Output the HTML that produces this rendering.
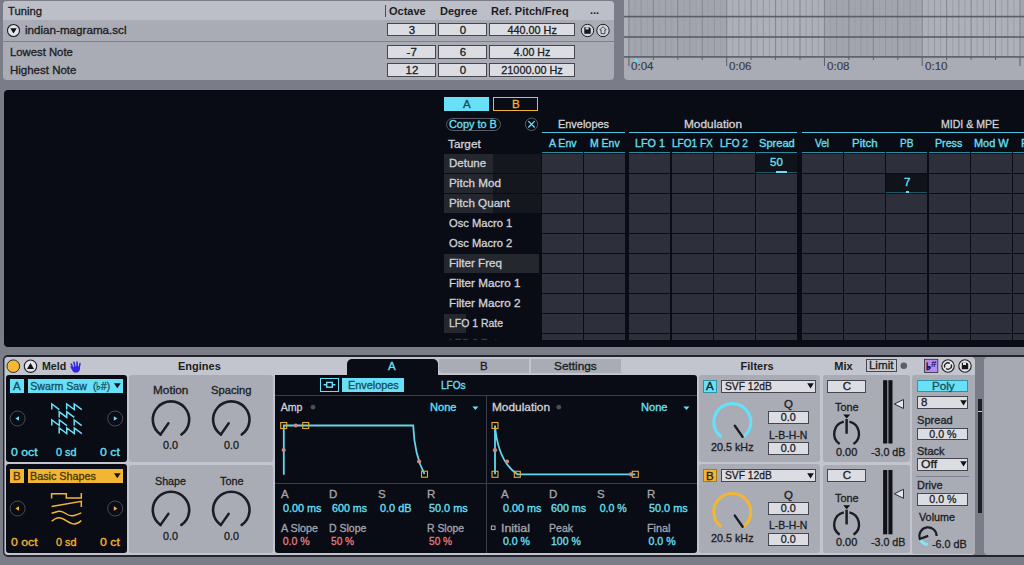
<!DOCTYPE html>
<html><head><meta charset="utf-8"><title>Meld</title>
<style>
html,body{margin:0;padding:0;}
body{width:1024px;height:565px;overflow:hidden;background:#7a7c88;position:relative;font-family:"Liberation Sans",sans-serif;font-size:10.6px;color:#1c1d22;-webkit-text-stroke:0.3px;}
.a{position:absolute;}
.t{position:absolute;white-space:nowrap;line-height:14px;height:14px;}
.c{text-align:center;}
.b{font-weight:bold;font-size:11px;-webkit-text-stroke:0;}
.vb{position:absolute;box-sizing:border-box;border:1px solid #45464e;background:#dcdde3;text-align:center;line-height:11px;height:13px;white-space:nowrap;}
.cy{color:#68e0f7;}
.go{color:#f3b632;}
.gr{color:#a4a5ad;}
.pk{color:#e27c7c;}
.wh{color:#d0d1d7;}
.sp{position:absolute;background:#a9abb5;border-radius:3px;}
.dk{position:absolute;background:#0a0c15;}
</style></head><body>
<!-- TUNING PANEL -->
<div class="a" style="left:3px;top:1px;width:611px;height:78.5px;background:#a9abb5;border-radius:4px;overflow:hidden;">
  <div class="a" style="left:0;top:0;width:611px;height:19.4px;background:#bcbec8;"></div>
  <div class="a" style="left:0;top:40px;width:611px;height:1px;background:#7d7f89;"></div>
</div>
<div class="t " style="left:7.5px;top:3.5px;transform:scaleX(1.059);transform-origin:0 50%;">Tuning</div>
<div class="t " style="left:25.0px;top:22.5px;transform:scaleX(1.098);transform-origin:0 50%;">indian-magrama.scl</div>
<div class="t " style="left:10.2px;top:44.5px;transform:scaleX(1.067);transform-origin:0 50%;">Lowest Note</div>
<div class="t " style="left:10.2px;top:62.5px;transform:scaleX(1.084);transform-origin:0 50%;">Highest Note</div>

<svg class="a" style="left:6px;top:23px;" width="15" height="15" viewBox="0 0 15 15"><circle cx="7.5" cy="7.5" r="6" fill="#e4e5ea" stroke="#1c1d22" stroke-width="1.1"/><path d="M4.2 5.2h6.6L7.5 10.6z" fill="#111"/></svg>
<div class="a" style="left:385px;top:5px;width:1px;height:12px;background:#4a4b53;"></div>
<div class="t b" style="left:389px;top:4px;">Octave</div>
<div class="t b" style="left:440px;top:4px;">Degree</div>
<div class="t b" style="left:491px;top:4px;">Ref. Pitch/Freq</div>
<div class="t b" style="left:590px;top:3px;">...</div>
<div class="vb" style="left:387.0px;top:23.0px;width:49.0px;height:13.0px;line-height:11.0px;line-height:12px;"><span style="display:inline-block;transform:scaleX(1.085);transform-origin:50% 50%;">3</span></div>
<div class="vb" style="left:438.0px;top:23.0px;width:49.0px;height:13.0px;line-height:11.0px;line-height:12px;"><span style="display:inline-block;transform:scaleX(1.085);transform-origin:50% 50%;">0</span></div>
<div class="vb" style="left:489.0px;top:23.0px;width:86.0px;height:13.0px;line-height:11.0px;line-height:12px;"><span style="display:inline-block;transform:scaleX(1.021);transform-origin:50% 50%;">440.00 Hz</span></div>
<div class="vb" style="left:387.0px;top:45.0px;width:49.0px;height:14.0px;line-height:12.0px;line-height:13px;"><span style="display:inline-block;transform:scaleX(1.085);transform-origin:50% 50%;">-7</span></div>
<div class="vb" style="left:438.0px;top:45.0px;width:49.0px;height:14.0px;line-height:12.0px;line-height:13px;"><span style="display:inline-block;transform:scaleX(1.085);transform-origin:50% 50%;">6</span></div>
<div class="vb" style="left:489.0px;top:45.0px;width:86.0px;height:14.0px;line-height:12.0px;line-height:13px;"><span style="display:inline-block;">4.00 Hz</span></div>
<div class="vb" style="left:387.0px;top:63.0px;width:49.0px;height:14.0px;line-height:12.0px;line-height:13px;"><span style="display:inline-block;transform:scaleX(1.085);transform-origin:50% 50%;">12</span></div>
<div class="vb" style="left:438.0px;top:63.0px;width:49.0px;height:14.0px;line-height:12.0px;line-height:13px;"><span style="display:inline-block;transform:scaleX(1.085);transform-origin:50% 50%;">0</span></div>
<div class="vb" style="left:489.0px;top:63.0px;width:86.0px;height:14.0px;line-height:12.0px;line-height:13px;"><span style="display:inline-block;transform:scaleX(1.024);transform-origin:50% 50%;">21000.00 Hz</span></div>
<svg class="a" style="left:580px;top:23px;" width="32" height="15" viewBox="0 0 32 15">
<circle cx="7.5" cy="7.5" r="6.2" fill="#d4d5db" stroke="#1c1d22" stroke-width="1"/>
<path d="M4.3 4.3h5.2l1.2 1.2v5.2H4.3z" fill="#16171c"/><rect x="5.6" y="4.3" width="3" height="2.2" fill="#d4d5db"/>
<circle cx="23" cy="7.5" r="6.2" fill="#d4d5db" stroke="#1c1d22" stroke-width="1"/>
<path d="M23 3.6l3.2 3.2h-1.3v3.9h-3.8V6.8h-1.3z" fill="none" stroke="#33343b" stroke-width="0.9"/>
</svg>
<!-- TIMELINE -->
<div class="a" style="left:624px;top:0;width:400px;height:79.5px;background:#a9abb5;border-radius:0 0 0 4px;overflow:hidden;">
<svg class="a" style="left:0;top:0" width="400" height="80" viewBox="0 0 400 80"><rect x="-92.9" y="0" width="97.8" height="57" fill="#adafb9"/><rect x="4.9" y="0" width="97.8" height="57" fill="#a2a4ae"/><rect x="102.7" y="0" width="97.8" height="57" fill="#adafb9"/><rect x="200.4" y="0" width="97.8" height="57" fill="#a2a4ae"/><rect x="298.2" y="0" width="97.8" height="57" fill="#adafb9"/><rect x="396.0" y="0" width="97.8" height="57" fill="#a2a4ae"/><rect x="4.40" y="0" width="1" height="57" fill="#83858f"/><rect x="10.51" y="0" width="1" height="57" fill="#9c9ea8"/><rect x="16.62" y="0" width="1" height="57" fill="#92949e"/><rect x="22.73" y="0" width="1" height="57" fill="#9c9ea8"/><rect x="28.84" y="0" width="1" height="57" fill="#83858f"/><rect x="34.95" y="0" width="1" height="57" fill="#9c9ea8"/><rect x="41.06" y="0" width="1" height="57" fill="#92949e"/><rect x="47.17" y="0" width="1" height="57" fill="#9c9ea8"/><rect x="53.28" y="0" width="1" height="57" fill="#83858f"/><rect x="59.40" y="0" width="1" height="57" fill="#9c9ea8"/><rect x="65.51" y="0" width="1" height="57" fill="#92949e"/><rect x="71.62" y="0" width="1" height="57" fill="#9c9ea8"/><rect x="77.73" y="0" width="1" height="57" fill="#83858f"/><rect x="83.84" y="0" width="1" height="57" fill="#9c9ea8"/><rect x="89.95" y="0" width="1" height="57" fill="#92949e"/><rect x="96.06" y="0" width="1" height="57" fill="#9c9ea8"/><rect x="102.17" y="0" width="1" height="57" fill="#83858f"/><rect x="108.28" y="0" width="1" height="57" fill="#9c9ea8"/><rect x="114.39" y="0" width="1" height="57" fill="#92949e"/><rect x="120.50" y="0" width="1" height="57" fill="#9c9ea8"/><rect x="126.61" y="0" width="1" height="57" fill="#83858f"/><rect x="132.72" y="0" width="1" height="57" fill="#9c9ea8"/><rect x="138.83" y="0" width="1" height="57" fill="#92949e"/><rect x="144.94" y="0" width="1" height="57" fill="#9c9ea8"/><rect x="151.05" y="0" width="1" height="57" fill="#83858f"/><rect x="157.17" y="0" width="1" height="57" fill="#9c9ea8"/><rect x="163.28" y="0" width="1" height="57" fill="#92949e"/><rect x="169.39" y="0" width="1" height="57" fill="#9c9ea8"/><rect x="175.50" y="0" width="1" height="57" fill="#83858f"/><rect x="181.61" y="0" width="1" height="57" fill="#9c9ea8"/><rect x="187.72" y="0" width="1" height="57" fill="#92949e"/><rect x="193.83" y="0" width="1" height="57" fill="#9c9ea8"/><rect x="199.94" y="0" width="1" height="57" fill="#83858f"/><rect x="206.05" y="0" width="1" height="57" fill="#9c9ea8"/><rect x="212.16" y="0" width="1" height="57" fill="#92949e"/><rect x="218.27" y="0" width="1" height="57" fill="#9c9ea8"/><rect x="224.38" y="0" width="1" height="57" fill="#83858f"/><rect x="230.49" y="0" width="1" height="57" fill="#9c9ea8"/><rect x="236.60" y="0" width="1" height="57" fill="#92949e"/><rect x="242.71" y="0" width="1" height="57" fill="#9c9ea8"/><rect x="248.82" y="0" width="1" height="57" fill="#83858f"/><rect x="254.94" y="0" width="1" height="57" fill="#9c9ea8"/><rect x="261.05" y="0" width="1" height="57" fill="#92949e"/><rect x="267.16" y="0" width="1" height="57" fill="#9c9ea8"/><rect x="273.27" y="0" width="1" height="57" fill="#83858f"/><rect x="279.38" y="0" width="1" height="57" fill="#9c9ea8"/><rect x="285.49" y="0" width="1" height="57" fill="#92949e"/><rect x="291.60" y="0" width="1" height="57" fill="#9c9ea8"/><rect x="297.71" y="0" width="1" height="57" fill="#83858f"/><rect x="303.82" y="0" width="1" height="57" fill="#9c9ea8"/><rect x="309.93" y="0" width="1" height="57" fill="#92949e"/><rect x="316.04" y="0" width="1" height="57" fill="#9c9ea8"/><rect x="322.15" y="0" width="1" height="57" fill="#83858f"/><rect x="328.26" y="0" width="1" height="57" fill="#9c9ea8"/><rect x="334.37" y="0" width="1" height="57" fill="#92949e"/><rect x="340.48" y="0" width="1" height="57" fill="#9c9ea8"/><rect x="346.59" y="0" width="1" height="57" fill="#83858f"/><rect x="352.71" y="0" width="1" height="57" fill="#9c9ea8"/><rect x="358.82" y="0" width="1" height="57" fill="#92949e"/><rect x="364.93" y="0" width="1" height="57" fill="#9c9ea8"/><rect x="371.04" y="0" width="1" height="57" fill="#83858f"/><rect x="377.15" y="0" width="1" height="57" fill="#9c9ea8"/><rect x="383.26" y="0" width="1" height="57" fill="#92949e"/><rect x="389.37" y="0" width="1" height="57" fill="#9c9ea8"/><rect x="395.48" y="0" width="1" height="57" fill="#83858f"/><rect x="0" y="15.8" width="400" height="1.6" fill="#5b5d67"/><rect x="0" y="36.2" width="400" height="1.6" fill="#5b5d67"/><rect x="0" y="56.1" width="400" height="1.6" fill="#5b5d67"/><rect x="4.40" y="57" width="1" height="9" fill="#5b5d67"/><rect x="28.84" y="57" width="1" height="3" fill="#5b5d67"/><rect x="53.28" y="57" width="1" height="3" fill="#5b5d67"/><rect x="77.73" y="57" width="1" height="3" fill="#5b5d67"/><rect x="102.17" y="57" width="1" height="9" fill="#5b5d67"/><rect x="126.61" y="57" width="1" height="3" fill="#5b5d67"/><rect x="151.05" y="57" width="1" height="3" fill="#5b5d67"/><rect x="175.50" y="57" width="1" height="3" fill="#5b5d67"/><rect x="199.94" y="57" width="1" height="9" fill="#5b5d67"/><rect x="224.38" y="57" width="1" height="3" fill="#5b5d67"/><rect x="248.82" y="57" width="1" height="3" fill="#5b5d67"/><rect x="273.27" y="57" width="1" height="3" fill="#5b5d67"/><rect x="297.71" y="57" width="1" height="9" fill="#5b5d67"/><rect x="322.15" y="57" width="1" height="3" fill="#5b5d67"/><rect x="346.59" y="57" width="1" height="3" fill="#5b5d67"/><rect x="371.04" y="57" width="1" height="3" fill="#5b5d67"/><rect x="395.48" y="57" width="1" height="9" fill="#5b5d67"/><path d="M12 57.500l3 5h-6z" fill="#5fe0f5"/></svg>
</div>
<div class="t" style="left:631.4px;top:59px;color:#3a3c44;-webkit-text-stroke:0.15px;transform:scaleX(1.09);transform-origin:0 50%;">0:04</div>
<div class="t" style="left:729.2px;top:59px;color:#3a3c44;-webkit-text-stroke:0.15px;transform:scaleX(1.09);transform-origin:0 50%;">0:06</div>
<div class="t" style="left:826.9px;top:59px;color:#3a3c44;-webkit-text-stroke:0.15px;transform:scaleX(1.09);transform-origin:0 50%;">0:08</div>
<div class="t" style="left:924.7px;top:59px;color:#3a3c44;-webkit-text-stroke:0.15px;transform:scaleX(1.09);transform-origin:0 50%;">0:10</div>
<!-- MATRIX -->
<div class="dk" style="left:4px;top:90px;width:1030px;height:257px;border-radius:4px;overflow:hidden;">
<div class="a" style="left:0;top:0;width:1030px;height:249.8px;overflow:hidden;">
<div class="a" style="left:440.0px;top:7.0px;width:45.0px;height:14.0px;background:#68e0f7;"></div>
<div class="t " style="left:458.7px;top:6.5px;transform:scaleX(1.085);transform-origin:0 50%;color:#174e5a;">A</div>
<div class="a" style="left:489px;top:7px;width:45px;height:14px;box-sizing:border-box;border:1px solid #f3b632;"></div>
<div class="t go" style="left:507.7px;top:6.5px;transform:scaleX(1.085);transform-origin:0 50%;">B</div>
<div class="a" style="left:441.5px;top:28px;width:55.5px;height:13px;box-sizing:border-box;border:1px solid #5a5c66;border-radius:7px;"></div>
<div class="t cy" style="left:445.3px;top:26.8px;transform:scaleX(1.026);transform-origin:0 50%;">Copy to B</div>
<svg class="a" style="left:520px;top:27px" width="15" height="15" viewBox="0 0 15 15"><circle cx="7.5" cy="7.3" r="6.2" fill="none" stroke="#5a5c66" stroke-width="1"/><path d="M4.3 4.1l6.4 6.4M10.7 4.1l-6.4 6.4" stroke="#68e0f7" stroke-width="1.3" fill="none"/></svg>
<div class="t wh" style="left:444.3px;top:46.5px;transform:scaleX(1.111);transform-origin:0 50%;">Target</div>
<div class="a" style="left:537.8px;top:41.5px;width:83.2px;height:1.5px;background:#4fc4dc;"></div>
<div class="t wh" style="left:553.9px;top:27.0px;transform:scaleX(1.031);transform-origin:0 50%;">Envelopes</div>
<div class="a" style="left:537.8px;top:62.2px;width:41.0px;height:1.0px;background:#2c8ea2;"></div>
<div class="t cy" style="left:544.5px;top:45.8px;transform:scaleX(0.994);transform-origin:0 50%;">A Env</div>
<div class="a" style="left:537.8px;top:64.2px;width:41.0px;height:18.6px;background:#2d2f3b;"></div>
<div class="a" style="left:537.8px;top:84.2px;width:41.0px;height:18.6px;background:#2d2f3b;"></div>
<div class="a" style="left:537.8px;top:104.2px;width:41.0px;height:18.6px;background:#2d2f3b;"></div>
<div class="a" style="left:537.8px;top:124.2px;width:41.0px;height:18.6px;background:#2d2f3b;"></div>
<div class="a" style="left:537.8px;top:144.2px;width:41.0px;height:18.6px;background:#2d2f3b;"></div>
<div class="a" style="left:537.8px;top:164.2px;width:41.0px;height:18.6px;background:#2d2f3b;"></div>
<div class="a" style="left:537.8px;top:184.2px;width:41.0px;height:18.6px;background:#2d2f3b;"></div>
<div class="a" style="left:537.8px;top:204.2px;width:41.0px;height:18.6px;background:#2d2f3b;"></div>
<div class="a" style="left:537.8px;top:224.2px;width:41.0px;height:18.6px;background:#2d2f3b;"></div>
<div class="a" style="left:537.8px;top:244.2px;width:41.0px;height:18.6px;background:#2d2f3b;"></div>
<div class="a" style="left:580.0px;top:62.2px;width:41.0px;height:1.0px;background:#2c8ea2;"></div>
<div class="t cy" style="left:585.7px;top:45.8px;transform:scaleX(0.986);transform-origin:0 50%;">M Env</div>
<div class="a" style="left:580.0px;top:64.2px;width:41.0px;height:18.6px;background:#2d2f3b;"></div>
<div class="a" style="left:580.0px;top:84.2px;width:41.0px;height:18.6px;background:#2d2f3b;"></div>
<div class="a" style="left:580.0px;top:104.2px;width:41.0px;height:18.6px;background:#2d2f3b;"></div>
<div class="a" style="left:580.0px;top:124.2px;width:41.0px;height:18.6px;background:#2d2f3b;"></div>
<div class="a" style="left:580.0px;top:144.2px;width:41.0px;height:18.6px;background:#2d2f3b;"></div>
<div class="a" style="left:580.0px;top:164.2px;width:41.0px;height:18.6px;background:#2d2f3b;"></div>
<div class="a" style="left:580.0px;top:184.2px;width:41.0px;height:18.6px;background:#2d2f3b;"></div>
<div class="a" style="left:580.0px;top:204.2px;width:41.0px;height:18.6px;background:#2d2f3b;"></div>
<div class="a" style="left:580.0px;top:224.2px;width:41.0px;height:18.6px;background:#2d2f3b;"></div>
<div class="a" style="left:580.0px;top:244.2px;width:41.0px;height:18.6px;background:#2d2f3b;"></div>
<div class="a" style="left:625.3px;top:41.5px;width:167.6px;height:1.5px;background:#4fc4dc;"></div>
<div class="t wh" style="left:680.1px;top:27.0px;transform:scaleX(1.119);transform-origin:0 50%;">Modulation</div>
<div class="a" style="left:625.3px;top:62.2px;width:41.0px;height:1.0px;background:#2c8ea2;"></div>
<div class="t cy" style="left:630.8px;top:45.8px;transform:scaleX(1.016);transform-origin:0 50%;">LFO 1</div>
<div class="a" style="left:625.3px;top:64.2px;width:41.0px;height:18.6px;background:#2d2f3b;"></div>
<div class="a" style="left:625.3px;top:84.2px;width:41.0px;height:18.6px;background:#2d2f3b;"></div>
<div class="a" style="left:625.3px;top:104.2px;width:41.0px;height:18.6px;background:#2d2f3b;"></div>
<div class="a" style="left:625.3px;top:124.2px;width:41.0px;height:18.6px;background:#2d2f3b;"></div>
<div class="a" style="left:625.3px;top:144.2px;width:41.0px;height:18.6px;background:#2d2f3b;"></div>
<div class="a" style="left:625.3px;top:164.2px;width:41.0px;height:18.6px;background:#2d2f3b;"></div>
<div class="a" style="left:625.3px;top:184.2px;width:41.0px;height:18.6px;background:#2d2f3b;"></div>
<div class="a" style="left:625.3px;top:204.2px;width:41.0px;height:18.6px;background:#2d2f3b;"></div>
<div class="a" style="left:625.3px;top:224.2px;width:41.0px;height:18.6px;background:#2d2f3b;"></div>
<div class="a" style="left:625.3px;top:244.2px;width:41.0px;height:18.6px;background:#2d2f3b;"></div>
<div class="a" style="left:667.5px;top:62.2px;width:41.0px;height:1.0px;background:#2c8ea2;"></div>
<div class="t cy" style="left:667.6px;top:45.8px;transform:scaleX(0.950);transform-origin:0 50%;">LFO1 FX</div>
<div class="a" style="left:667.5px;top:64.2px;width:41.0px;height:18.6px;background:#2d2f3b;"></div>
<div class="a" style="left:667.5px;top:84.2px;width:41.0px;height:18.6px;background:#2d2f3b;"></div>
<div class="a" style="left:667.5px;top:104.2px;width:41.0px;height:18.6px;background:#2d2f3b;"></div>
<div class="a" style="left:667.5px;top:124.2px;width:41.0px;height:18.6px;background:#2d2f3b;"></div>
<div class="a" style="left:667.5px;top:144.2px;width:41.0px;height:18.6px;background:#2d2f3b;"></div>
<div class="a" style="left:667.5px;top:164.2px;width:41.0px;height:18.6px;background:#2d2f3b;"></div>
<div class="a" style="left:667.5px;top:184.2px;width:41.0px;height:18.6px;background:#2d2f3b;"></div>
<div class="a" style="left:667.5px;top:204.2px;width:41.0px;height:18.6px;background:#2d2f3b;"></div>
<div class="a" style="left:667.5px;top:224.2px;width:41.0px;height:18.6px;background:#2d2f3b;"></div>
<div class="a" style="left:667.5px;top:244.2px;width:41.0px;height:18.6px;background:#2d2f3b;"></div>
<div class="a" style="left:709.7px;top:62.2px;width:41.0px;height:1.0px;background:#2c8ea2;"></div>
<div class="t cy" style="left:716.2px;top:45.8px;transform:scaleX(0.950);transform-origin:0 50%;">LFO 2</div>
<div class="a" style="left:709.7px;top:64.2px;width:41.0px;height:18.6px;background:#2d2f3b;"></div>
<div class="a" style="left:709.7px;top:84.2px;width:41.0px;height:18.6px;background:#2d2f3b;"></div>
<div class="a" style="left:709.7px;top:104.2px;width:41.0px;height:18.6px;background:#2d2f3b;"></div>
<div class="a" style="left:709.7px;top:124.2px;width:41.0px;height:18.6px;background:#2d2f3b;"></div>
<div class="a" style="left:709.7px;top:144.2px;width:41.0px;height:18.6px;background:#2d2f3b;"></div>
<div class="a" style="left:709.7px;top:164.2px;width:41.0px;height:18.6px;background:#2d2f3b;"></div>
<div class="a" style="left:709.7px;top:184.2px;width:41.0px;height:18.6px;background:#2d2f3b;"></div>
<div class="a" style="left:709.7px;top:204.2px;width:41.0px;height:18.6px;background:#2d2f3b;"></div>
<div class="a" style="left:709.7px;top:224.2px;width:41.0px;height:18.6px;background:#2d2f3b;"></div>
<div class="a" style="left:709.7px;top:244.2px;width:41.0px;height:18.6px;background:#2d2f3b;"></div>
<div class="a" style="left:751.9px;top:62.2px;width:41.0px;height:1.0px;background:#2c8ea2;"></div>
<div class="t cy" style="left:754.5px;top:45.8px;transform:scaleX(1.045);transform-origin:0 50%;">Spread</div>
<div class="a" style="left:751.9px;top:64.2px;width:41.0px;height:18.6px;background:#2d2f3b;"></div>
<div class="a" style="left:751.9px;top:84.2px;width:41.0px;height:18.6px;background:#2d2f3b;"></div>
<div class="a" style="left:751.9px;top:104.2px;width:41.0px;height:18.6px;background:#2d2f3b;"></div>
<div class="a" style="left:751.9px;top:124.2px;width:41.0px;height:18.6px;background:#2d2f3b;"></div>
<div class="a" style="left:751.9px;top:144.2px;width:41.0px;height:18.6px;background:#2d2f3b;"></div>
<div class="a" style="left:751.9px;top:164.2px;width:41.0px;height:18.6px;background:#2d2f3b;"></div>
<div class="a" style="left:751.9px;top:184.2px;width:41.0px;height:18.6px;background:#2d2f3b;"></div>
<div class="a" style="left:751.9px;top:204.2px;width:41.0px;height:18.6px;background:#2d2f3b;"></div>
<div class="a" style="left:751.9px;top:224.2px;width:41.0px;height:18.6px;background:#2d2f3b;"></div>
<div class="a" style="left:751.9px;top:244.2px;width:41.0px;height:18.6px;background:#2d2f3b;"></div>
<div class="a" style="left:797.9px;top:41.5px;width:340.0px;height:1.5px;background:#4fc4dc;"></div>
<div class="t wh" style="left:937.0px;top:27.0px;transform:scaleX(0.996);transform-origin:0 50%;">MIDI &amp; MPE</div>
<div class="a" style="left:797.9px;top:62.2px;width:41.0px;height:1.0px;background:#2c8ea2;"></div>
<div class="t cy" style="left:811.4px;top:45.8px;transform:scaleX(0.950);transform-origin:0 50%;">Vel</div>
<div class="a" style="left:797.9px;top:64.2px;width:41.0px;height:18.6px;background:#2d2f3b;"></div>
<div class="a" style="left:797.9px;top:84.2px;width:41.0px;height:18.6px;background:#2d2f3b;"></div>
<div class="a" style="left:797.9px;top:104.2px;width:41.0px;height:18.6px;background:#2d2f3b;"></div>
<div class="a" style="left:797.9px;top:124.2px;width:41.0px;height:18.6px;background:#2d2f3b;"></div>
<div class="a" style="left:797.9px;top:144.2px;width:41.0px;height:18.6px;background:#2d2f3b;"></div>
<div class="a" style="left:797.9px;top:164.2px;width:41.0px;height:18.6px;background:#2d2f3b;"></div>
<div class="a" style="left:797.9px;top:184.2px;width:41.0px;height:18.6px;background:#2d2f3b;"></div>
<div class="a" style="left:797.9px;top:204.2px;width:41.0px;height:18.6px;background:#2d2f3b;"></div>
<div class="a" style="left:797.9px;top:224.2px;width:41.0px;height:18.6px;background:#2d2f3b;"></div>
<div class="a" style="left:797.9px;top:244.2px;width:41.0px;height:18.6px;background:#2d2f3b;"></div>
<div class="a" style="left:840.1px;top:62.2px;width:41.0px;height:1.0px;background:#2c8ea2;"></div>
<div class="t cy" style="left:847.9px;top:45.8px;transform:scaleX(1.083);transform-origin:0 50%;">Pitch</div>
<div class="a" style="left:840.1px;top:64.2px;width:41.0px;height:18.6px;background:#2d2f3b;"></div>
<div class="a" style="left:840.1px;top:84.2px;width:41.0px;height:18.6px;background:#2d2f3b;"></div>
<div class="a" style="left:840.1px;top:104.2px;width:41.0px;height:18.6px;background:#2d2f3b;"></div>
<div class="a" style="left:840.1px;top:124.2px;width:41.0px;height:18.6px;background:#2d2f3b;"></div>
<div class="a" style="left:840.1px;top:144.2px;width:41.0px;height:18.6px;background:#2d2f3b;"></div>
<div class="a" style="left:840.1px;top:164.2px;width:41.0px;height:18.6px;background:#2d2f3b;"></div>
<div class="a" style="left:840.1px;top:184.2px;width:41.0px;height:18.6px;background:#2d2f3b;"></div>
<div class="a" style="left:840.1px;top:204.2px;width:41.0px;height:18.6px;background:#2d2f3b;"></div>
<div class="a" style="left:840.1px;top:224.2px;width:41.0px;height:18.6px;background:#2d2f3b;"></div>
<div class="a" style="left:840.1px;top:244.2px;width:41.0px;height:18.6px;background:#2d2f3b;"></div>
<div class="a" style="left:882.3px;top:62.2px;width:41.0px;height:1.0px;background:#2c8ea2;"></div>
<div class="t cy" style="left:896.1px;top:45.8px;transform:scaleX(0.950);transform-origin:0 50%;">PB</div>
<div class="a" style="left:882.3px;top:64.2px;width:41.0px;height:18.6px;background:#2d2f3b;"></div>
<div class="a" style="left:882.3px;top:84.2px;width:41.0px;height:18.6px;background:#2d2f3b;"></div>
<div class="a" style="left:882.3px;top:104.2px;width:41.0px;height:18.6px;background:#2d2f3b;"></div>
<div class="a" style="left:882.3px;top:124.2px;width:41.0px;height:18.6px;background:#2d2f3b;"></div>
<div class="a" style="left:882.3px;top:144.2px;width:41.0px;height:18.6px;background:#2d2f3b;"></div>
<div class="a" style="left:882.3px;top:164.2px;width:41.0px;height:18.6px;background:#2d2f3b;"></div>
<div class="a" style="left:882.3px;top:184.2px;width:41.0px;height:18.6px;background:#2d2f3b;"></div>
<div class="a" style="left:882.3px;top:204.2px;width:41.0px;height:18.6px;background:#2d2f3b;"></div>
<div class="a" style="left:882.3px;top:224.2px;width:41.0px;height:18.6px;background:#2d2f3b;"></div>
<div class="a" style="left:882.3px;top:244.2px;width:41.0px;height:18.6px;background:#2d2f3b;"></div>
<div class="a" style="left:924.5px;top:62.2px;width:41.0px;height:1.0px;background:#2c8ea2;"></div>
<div class="t cy" style="left:931.4px;top:45.8px;transform:scaleX(1.005);transform-origin:0 50%;">Press</div>
<div class="a" style="left:924.5px;top:64.2px;width:41.0px;height:18.6px;background:#2d2f3b;"></div>
<div class="a" style="left:924.5px;top:84.2px;width:41.0px;height:18.6px;background:#2d2f3b;"></div>
<div class="a" style="left:924.5px;top:104.2px;width:41.0px;height:18.6px;background:#2d2f3b;"></div>
<div class="a" style="left:924.5px;top:124.2px;width:41.0px;height:18.6px;background:#2d2f3b;"></div>
<div class="a" style="left:924.5px;top:144.2px;width:41.0px;height:18.6px;background:#2d2f3b;"></div>
<div class="a" style="left:924.5px;top:164.2px;width:41.0px;height:18.6px;background:#2d2f3b;"></div>
<div class="a" style="left:924.5px;top:184.2px;width:41.0px;height:18.6px;background:#2d2f3b;"></div>
<div class="a" style="left:924.5px;top:204.2px;width:41.0px;height:18.6px;background:#2d2f3b;"></div>
<div class="a" style="left:924.5px;top:224.2px;width:41.0px;height:18.6px;background:#2d2f3b;"></div>
<div class="a" style="left:924.5px;top:244.2px;width:41.0px;height:18.6px;background:#2d2f3b;"></div>
<div class="a" style="left:966.7px;top:62.2px;width:41.0px;height:1.0px;background:#2c8ea2;"></div>
<div class="t cy" style="left:969.9px;top:45.8px;transform:scaleX(1.031);transform-origin:0 50%;">Mod W</div>
<div class="a" style="left:966.7px;top:64.2px;width:41.0px;height:18.6px;background:#2d2f3b;"></div>
<div class="a" style="left:966.7px;top:84.2px;width:41.0px;height:18.6px;background:#2d2f3b;"></div>
<div class="a" style="left:966.7px;top:104.2px;width:41.0px;height:18.6px;background:#2d2f3b;"></div>
<div class="a" style="left:966.7px;top:124.2px;width:41.0px;height:18.6px;background:#2d2f3b;"></div>
<div class="a" style="left:966.7px;top:144.2px;width:41.0px;height:18.6px;background:#2d2f3b;"></div>
<div class="a" style="left:966.7px;top:164.2px;width:41.0px;height:18.6px;background:#2d2f3b;"></div>
<div class="a" style="left:966.7px;top:184.2px;width:41.0px;height:18.6px;background:#2d2f3b;"></div>
<div class="a" style="left:966.7px;top:204.2px;width:41.0px;height:18.6px;background:#2d2f3b;"></div>
<div class="a" style="left:966.7px;top:224.2px;width:41.0px;height:18.6px;background:#2d2f3b;"></div>
<div class="a" style="left:966.7px;top:244.2px;width:41.0px;height:18.6px;background:#2d2f3b;"></div>
<div class="a" style="left:1008.9px;top:62.2px;width:41.0px;height:1.0px;background:#2c8ea2;"></div>
<div class="t cy" style="left:1016.5px;top:45.8px;transform:scaleX(1.085);transform-origin:0 50%;">R</div>
<div class="a" style="left:1008.9px;top:64.2px;width:41.0px;height:18.6px;background:#2d2f3b;"></div>
<div class="a" style="left:1008.9px;top:84.2px;width:41.0px;height:18.6px;background:#2d2f3b;"></div>
<div class="a" style="left:1008.9px;top:104.2px;width:41.0px;height:18.6px;background:#2d2f3b;"></div>
<div class="a" style="left:1008.9px;top:124.2px;width:41.0px;height:18.6px;background:#2d2f3b;"></div>
<div class="a" style="left:1008.9px;top:144.2px;width:41.0px;height:18.6px;background:#2d2f3b;"></div>
<div class="a" style="left:1008.9px;top:164.2px;width:41.0px;height:18.6px;background:#2d2f3b;"></div>
<div class="a" style="left:1008.9px;top:184.2px;width:41.0px;height:18.6px;background:#2d2f3b;"></div>
<div class="a" style="left:1008.9px;top:204.2px;width:41.0px;height:18.6px;background:#2d2f3b;"></div>
<div class="a" style="left:1008.9px;top:224.2px;width:41.0px;height:18.6px;background:#2d2f3b;"></div>
<div class="a" style="left:1008.9px;top:244.2px;width:41.0px;height:18.6px;background:#2d2f3b;"></div>
<div class="a" style="left:440.0px;top:64.2px;width:97.0px;height:18.6px;background:#15171f;"></div>
<div class="a" style="left:440.0px;top:64.2px;width:49.0px;height:18.6px;background:#25272f;"></div>
<div class="t wh" style="left:444.5px;top:66.3px;transform:scaleX(1.086);transform-origin:0 50%;">Detune</div>
<div class="a" style="left:440.0px;top:84.2px;width:97.0px;height:18.6px;background:#15171f;"></div>
<div class="a" style="left:440.0px;top:84.2px;width:49.0px;height:18.6px;background:#25272f;"></div>
<div class="t wh" style="left:444.5px;top:86.3px;transform:scaleX(1.104);transform-origin:0 50%;">Pitch Mod</div>
<div class="a" style="left:440.0px;top:104.2px;width:97.0px;height:18.6px;background:#15171f;"></div>
<div class="a" style="left:440.0px;top:104.2px;width:49.0px;height:18.6px;background:#25272f;"></div>
<div class="t wh" style="left:444.5px;top:106.3px;transform:scaleX(1.099);transform-origin:0 50%;">Pitch Quant</div>
<div class="t wh" style="left:444.5px;top:126.3px;transform:scaleX(1.054);transform-origin:0 50%;">Osc Macro 1</div>
<div class="t wh" style="left:444.5px;top:146.3px;transform:scaleX(1.054);transform-origin:0 50%;">Osc Macro 2</div>
<div class="a" style="left:440.0px;top:164.2px;width:95.0px;height:18.6px;background:#15171f;"></div>
<div class="a" style="left:440.0px;top:164.2px;width:95.0px;height:18.6px;background:#25272f;"></div>
<div class="t wh" style="left:444.5px;top:166.3px;transform:scaleX(1.098);transform-origin:0 50%;">Filter Freq</div>
<div class="t wh" style="left:444.5px;top:186.3px;transform:scaleX(1.104);transform-origin:0 50%;">Filter Macro 1</div>
<div class="t wh" style="left:444.5px;top:206.3px;transform:scaleX(1.104);transform-origin:0 50%;">Filter Macro 2</div>
<div class="a" style="left:440.0px;top:224.2px;width:22.0px;height:18.6px;background:#25272f;"></div>
<div class="t wh" style="left:444.5px;top:226.3px;transform:scaleX(0.988);transform-origin:0 50%;">LFO 1 Rate</div>
<div class="t wh" style="left:444.5px;top:246.3px;transform:scaleX(0.988);transform-origin:0 50%;opacity:0.25;">LFO 2 Rate</div>
<div class="a" style="left:751.9px;top:64.2px;width:41.0px;height:18.6px;background:#11131b;"></div>
<div class="a" style="left:751.9px;top:81.8px;width:41.0px;height:1.0px;background:#1f5663;"></div>
<div class="a" style="left:772.2px;top:81.0px;width:10.5px;height:2.0px;background:#68e0f7;"></div>
<div class="t cy" style="left:766.0px;top:64.8px;transform:scaleX(1.085);transform-origin:0 50%;">50</div>
<div class="a" style="left:882.3px;top:84.2px;width:41.0px;height:18.6px;background:#11131b;"></div>
<div class="a" style="left:882.3px;top:101.8px;width:41.0px;height:1.0px;background:#1f5663;"></div>
<div class="a" style="left:902.2px;top:101.0px;width:3.0px;height:2.0px;background:#68e0f7;"></div>
<div class="t cy" style="left:899.6px;top:84.8px;transform:scaleX(1.085);transform-origin:0 50%;">7</div>
</div></div>
<!-- DEVICE -->
<div class="a" style="left:3px;top:355px;width:1040px;height:202px;box-sizing:border-box;border:2px solid #23242c;border-left-width:1.5px;border-radius:5px;background:#7a7c88;"></div>
<div class="a" style="left:4.5px;top:357px;width:970.5px;height:198px;border-radius:3px 4px 4px 3px;background:#c3c5ce;"></div>
<svg class="a" style="left:0;top:0" width="1024" height="565" viewBox="0 0 1024 565"><circle cx="13.3" cy="366.2" r="6.3" fill="#f8b932" stroke="#2b2c34" stroke-width="1"/><circle cx="30.5" cy="366.2" r="6.2" fill="#e4e5ea" stroke="#1c1d22" stroke-width="1.1"/><path d="M27 369h7L30.500 363z" fill="#111"/><g fill="#3428dc" stroke="none" transform="rotate(-8 76 367) translate(152.200 0) scale(-1 1)"><rect x="72.3" y="363.2" width="1.5" height="5" rx="0.75" transform="rotate(-18 73 368)"/><rect x="74.2" y="361.4" width="1.6" height="6" rx="0.8" transform="rotate(-6 75 367)"/><rect x="76.3" y="361.2" width="1.6" height="6" rx="0.8" transform="rotate(6 77 367)"/><rect x="78.300" y="362.4" width="1.5" height="5.4" rx="0.75" transform="rotate(18 79 368)"/><path d="M72.2 367.2c0-1 6.8-1.4 7.600 0.200l0.600-1.600c0.500-1 1.600-0.400 1.200 0.600l-1.400 3.800c-0.600 1.600-1.800 2.400-3.600 2.400c-2.400 0-4.400-1.800-4.400-5.400z"/></g></svg>
<div class="t b" style="left:42.2px;top:358.8px;transform:scaleX(0.966);transform-origin:0 50%;">Meld</div>
<div class="t b" style="left:178.0px;top:358.8px;">Engines</div>
<div class="t b" style="left:740.6px;top:358.8px;">Filters</div>
<div class="t b" style="left:834.3px;top:358.8px;">Mix</div>
<div class="a" style="left:5.8px;top:375.0px;width:121.2px;height:86.7px;background:#0a0c15;border-radius:3px;"></div>
<div class="a" style="left:10.2px;top:379.0px;width:13.6px;height:13.7px;background:#68e0f7;"></div>
<div class="t " style="left:13.2px;top:378.5px;transform:scaleX(1.085);transform-origin:0 50%;color:#174e5a;">A</div>
<div class="a" style="left:27.7px;top:379.0px;width:95.3px;height:13.7px;background:#68e0f7;"></div>
<div class="t " style="left:30.3px;top:378.5px;color:#174e5a;">Swarm Saw</div>
<div class="t " style="left:93.4px;top:378.5px;transform:scaleX(0.950);transform-origin:0 50%;color:#174e5a;">(&#9837;#)</div>
<div class="a" style="left:5.8px;top:464.3px;width:121.2px;height:89.0px;background:#0a0c15;border-radius:3px;"></div>
<div class="a" style="left:10.2px;top:469.0px;width:13.6px;height:13.7px;background:#f3b632;"></div>
<div class="t " style="left:13.2px;top:468.5px;transform:scaleX(1.085);transform-origin:0 50%;color:#4a3508;">B</div>
<div class="a" style="left:27.7px;top:469.0px;width:95.3px;height:13.7px;background:#f3b632;"></div>
<div class="t " style="left:30.3px;top:468.5px;transform:scaleX(1.018);transform-origin:0 50%;color:#4a3508;">Basic Shapes</div>
<svg class="a" style="left:0;top:0" width="1024" height="565" viewBox="0 0 1024 565"><path d="M113.900 383.3h6.800l-3.400 4.900z" fill="#10181c"/><circle cx="17.6" cy="418.5" r="7.5" fill="none" stroke="#4a4c55" stroke-width="1"/><path d="M15.400000000000002 418.5l3.6 -2.3v4.6z" fill="#68e0f7"/><circle cx="115.2" cy="418.5" r="7.5" fill="none" stroke="#4a4c55" stroke-width="1"/><path d="M117.4 418.5l-3.6 -2.3v4.6z" fill="#68e0f7"/><g fill="none" stroke="#68e0f7" stroke-width="1.500" stroke-linejoin="miter"><path d="M51.80 409.60v-5.6l7.55 5.6"/><path d="M66.70 409.60v-5.6l7.55 5.6v-5.6l7.55 5.6"/><path d="M59.20 417.40v-5.6l7.55 5.6v-5.6l7.55 5.6"/><path d="M51.80 425.60v-5.6l7.55 5.6v-5.6l7.55 5.6"/><path d="M74.20 425.60v-5.6l7.55 5.6"/><path d="M59.20 433.60v-5.6l7.55 5.6v-5.6l7.55 5.6v-5.6l7.55 5.6"/></g><path d="M113.900 473.3h6.800l-3.400 4.900z" fill="#10181c"/><circle cx="17.6" cy="508.5" r="7.5" fill="none" stroke="#4a4c55" stroke-width="1"/><path d="M15.400000000000002 508.5l3.6 -2.3v4.6z" fill="#f3b632"/><circle cx="115.2" cy="508.5" r="7.5" fill="none" stroke="#4a4c55" stroke-width="1"/><path d="M117.4 508.5l-3.6 -2.3v4.6z" fill="#f3b632"/><g fill="none" stroke="#f3b632" stroke-width="1.500"><path d="M51.6 498.5v-4.7h14.7v4.3h15v-5.100"/><path d="M51.6 506.4l29.700 -5.100v5.600"/><path d="M51.6 513.3q4.500 -1.300 7 -2c2.500 -0.700 4 0 7 2.200s6 2.700 8.500 2q3.500 -1 7.200 -2.600"/><path d="M51.6 521.3c2.500 -2.200 5 -3.600 7.500 -3.600c5 0 10 6.300 15.200 6.300c2.500 0 5 -1.500 7 -3.500"/></g></svg>
<div class="t cy" style="left:11.4px;top:444.7px;transform:scaleX(1.159);transform-origin:0 50%;">0 oct</div>
<div class="t cy" style="left:56.3px;top:444.7px;transform:scaleX(1.024);transform-origin:0 50%;">0 sd</div>
<div class="t cy" style="left:100.4px;top:444.7px;transform:scaleX(1.160);transform-origin:0 50%;">0 ct</div>
<div class="t go" style="left:11.4px;top:535.2px;transform:scaleX(1.159);transform-origin:0 50%;">0 oct</div>
<div class="t go" style="left:56.3px;top:535.2px;transform:scaleX(1.024);transform-origin:0 50%;">0 sd</div>
<div class="t go" style="left:100.4px;top:535.2px;transform:scaleX(1.160);transform-origin:0 50%;">0 ct</div>
<div class="a" style="left:128.6px;top:375.3px;width:144.4px;height:86.4px;background:#a9abb5;border-radius:3px;"></div>
<div class="a" style="left:128.6px;top:464.8px;width:144.4px;height:88.5px;background:#a9abb5;border-radius:3px;"></div>
<svg class="a" style="left:0;top:0" width="1024" height="565" viewBox="0 0 1024 565"><path d="M160.56 434.51A18.2 18.2 0 1 1 181.44 434.51" fill="none" stroke="#1c1d22" stroke-width="2.6" stroke-linecap="round"/><path d="M168.42 423.29L160.56 434.51" stroke="#1c1d22" stroke-width="2.4" stroke-linecap="round" fill="none"/><path d="M220.86 434.51A18.2 18.2 0 1 1 241.74 434.51" fill="none" stroke="#1c1d22" stroke-width="2.6" stroke-linecap="round"/><path d="M228.72 423.29L220.86 434.51" stroke="#1c1d22" stroke-width="2.4" stroke-linecap="round" fill="none"/><path d="M160.56 524.91A18.2 18.2 0 1 1 181.44 524.91" fill="none" stroke="#1c1d22" stroke-width="2.6" stroke-linecap="round"/><path d="M168.42 513.69L160.56 524.91" stroke="#1c1d22" stroke-width="2.4" stroke-linecap="round" fill="none"/><path d="M220.86 524.91A18.2 18.2 0 1 1 241.74 524.91" fill="none" stroke="#1c1d22" stroke-width="2.6" stroke-linecap="round"/><path d="M228.72 513.69L220.86 524.91" stroke="#1c1d22" stroke-width="2.4" stroke-linecap="round" fill="none"/></svg>
<div class="t " style="left:152.9px;top:383.0px;transform:scaleX(1.113);transform-origin:0 50%;">Motion</div>
<div class="t " style="left:211.1px;top:383.0px;transform:scaleX(1.058);transform-origin:0 50%;">Spacing</div>
<div class="t " style="left:155.1px;top:473.7px;transform:scaleX(1.012);transform-origin:0 50%;">Shape</div>
<div class="t " style="left:219.5px;top:473.7px;transform:scaleX(1.027);transform-origin:0 50%;">Tone</div>
<div class="t " style="left:162.8px;top:437.8px;transform:scaleX(1.019);transform-origin:0 50%;">0.0</div>
<div class="t " style="left:162.8px;top:529.0px;transform:scaleX(1.019);transform-origin:0 50%;">0.0</div>
<div class="t " style="left:223.5px;top:437.8px;transform:scaleX(1.019);transform-origin:0 50%;">0.0</div>
<div class="t " style="left:223.5px;top:529.0px;transform:scaleX(1.019);transform-origin:0 50%;">0.0</div>
<div class="a" style="left:275.3px;top:375.0px;width:422.0px;height:178.3px;background:#0a0c15;border-radius:0 3px 3px 3px;"></div>
<div class="a" style="left:347.0px;top:359.0px;width:90.5px;height:17.0px;background:#0a0c15;border-radius:5px 5px 0 0;"></div>
<div class="a" style="left:438.5px;top:358.8px;width:90.5px;height:14.2px;background:#a9abb5;border-radius:0 0 0 4px;"></div>
<div class="a" style="left:531.0px;top:358.8px;width:90.0px;height:14.2px;background:#a9abb5;"></div>
<div class="t cy" style="left:387.8px;top:358.8px;transform:scaleX(1.085);transform-origin:0 50%;">A</div>
<div class="t " style="left:479.8px;top:358.8px;transform:scaleX(1.085);transform-origin:0 50%;">B</div>
<div class="t " style="left:554.4px;top:358.8px;transform:scaleX(1.118);transform-origin:0 50%;">Settings</div>
<div class="a" style="left:320.3px;top:378px;width:18.400px;height:13.7px;box-sizing:border-box;border:1px solid #68e0f7;"></div>
<svg class="a" style="left:0;top:0" width="1024" height="565" viewBox="0 0 1024 565"><g fill="none" stroke="#68e0f7" stroke-width="1.400"><rect x="326.7" y="382.4" width="5.6" height="4.8"/><path d="M323.6 384.800h3M332.400 384.800h3"/></g></svg>
<div class="a" style="left:341.8px;top:378.0px;width:62.7px;height:13.7px;background:#68e0f7;"></div>
<div class="t " style="left:347.8px;top:377.5px;transform:scaleX(1.027);transform-origin:0 50%;color:#174e5a;">Envelopes</div>
<div class="t cy" style="left:441.3px;top:377.5px;transform:scaleX(0.950);transform-origin:0 50%;">LFOs</div>
<div class="a" style="left:275.3px;top:395.2px;width:422.0px;height:1.0px;background:#3c3e47;"></div>
<div class="a" style="left:486.0px;top:395.2px;width:1.0px;height:158.0px;background:#3c3e47;"></div>
<div class="a" style="left:275.3px;top:483.0px;width:422.0px;height:1.0px;background:#3c3e47;"></div>
<div class="t wh" style="left:280.7px;top:399.5px;">Amp</div>
<div class="t wh" style="left:492.0px;top:399.5px;transform:scaleX(1.119);transform-origin:0 50%;">Modulation</div>
<div class="t cy" style="left:429.8px;top:399.5px;transform:scaleX(1.046);transform-origin:0 50%;">None</div>
<div class="t cy" style="left:641.0px;top:399.5px;transform:scaleX(1.046);transform-origin:0 50%;">None</div>
<svg class="a" style="left:0;top:0" width="1024" height="565" viewBox="0 0 1024 565"><circle cx="313" cy="407.2" r="2.4" fill="#4c4e57"/><circle cx="558.8" cy="407.2" r="2.400" fill="#4c4e57"/><path d="M472.400 406.500h6l-3 3.400z" fill="#68e0f7"/><path d="M683.400 406.500h6l-3 3.400z" fill="#68e0f7"/><path d="M283.800 474.800V425.500H413.200C414 445 418 462 424.500 474.200" fill="none" stroke="#62d6ec" stroke-width="1.800"/><rect x="280.7" y="422.5" width="6" height="6" fill="none" stroke="#e3ac2f" stroke-width="1.100"/><rect x="302.7" y="422.5" width="6" height="6" fill="none" stroke="#e3ac2f" stroke-width="1.100"/><rect x="421.5" y="471.2" width="6" height="6" fill="none" stroke="#e3ac2f" stroke-width="1.100"/><circle cx="295.8" cy="425.5" r="2.100" fill="#c98a8a"/><circle cx="283.7" cy="450" r="2.100" fill="#c98a8a"/><circle cx="419.1" cy="461.5" r="2.100" fill="#c98a8a"/><path d="M495 474.300V425.500C497 450 505 466 517.300 474.300H635.300" fill="none" stroke="#62d6ec" stroke-width="1.800"/><rect x="492" y="422.5" width="6" height="6" fill="none" stroke="#e3ac2f" stroke-width="1.100"/><rect x="492" y="471.3" width="6" height="6" fill="none" stroke="#e3ac2f" stroke-width="1.100"/><rect x="514.3" y="471.3" width="6" height="6" fill="none" stroke="#e3ac2f" stroke-width="1.100"/><rect x="632.3" y="471.3" width="6" height="6" fill="none" stroke="#e3ac2f" stroke-width="1.100"/><circle cx="495" cy="450.2" r="2.100" fill="#c98a8a"/><circle cx="507" cy="461.6" r="2.100" fill="#c98a8a"/><circle cx="631" cy="474.3" r="2.100" fill="#c98a8a"/><rect x="491.400" y="526" width="3.600" height="3.600" fill="none" stroke="#b0b1b8" stroke-width="1"/></svg>
<div class="t gr" style="left:281.0px;top:486.5px;transform:scaleX(1.085);transform-origin:0 50%;">A</div>
<div class="t gr" style="left:329.4px;top:486.5px;transform:scaleX(1.085);transform-origin:0 50%;">D</div>
<div class="t gr" style="left:377.7px;top:486.5px;transform:scaleX(1.085);transform-origin:0 50%;">S</div>
<div class="t gr" style="left:426.6px;top:486.5px;transform:scaleX(1.085);transform-origin:0 50%;">R</div>
<div class="t cy" style="left:282.7px;top:500.8px;transform:scaleX(1.022);transform-origin:0 50%;">0.00 ms</div>
<div class="t cy" style="left:331.5px;top:500.8px;transform:scaleX(1.008);transform-origin:0 50%;">600 ms</div>
<div class="t cy" style="left:380.0px;top:500.8px;transform:scaleX(1.029);transform-origin:0 50%;">0.0 dB</div>
<div class="t cy" style="left:428.8px;top:500.8px;transform:scaleX(1.025);transform-origin:0 50%;">50.0 ms</div>
<div class="t gr" style="left:281.0px;top:521.0px;transform:scaleX(1.013);transform-origin:0 50%;">A Slope</div>
<div class="t gr" style="left:329.4px;top:521.0px;transform:scaleX(0.992);transform-origin:0 50%;">D Slope</div>
<div class="t gr" style="left:426.6px;top:521.0px;transform:scaleX(0.982);transform-origin:0 50%;">R Slope</div>
<div class="t pk" style="left:282.7px;top:533.9px;">0.0 %</div>
<div class="t pk" style="left:331.0px;top:533.9px;transform:scaleX(0.957);transform-origin:0 50%;">50 %</div>
<div class="t pk" style="left:428.5px;top:533.9px;transform:scaleX(0.957);transform-origin:0 50%;">50 %</div>
<div class="t gr" style="left:500.5px;top:486.5px;transform:scaleX(1.085);transform-origin:0 50%;">A</div>
<div class="t gr" style="left:549.2px;top:486.5px;transform:scaleX(1.085);transform-origin:0 50%;">D</div>
<div class="t gr" style="left:597.4px;top:486.5px;transform:scaleX(1.085);transform-origin:0 50%;">S</div>
<div class="t gr" style="left:646.7px;top:486.5px;transform:scaleX(1.085);transform-origin:0 50%;">R</div>
<div class="t cy" style="left:502.9px;top:500.8px;transform:scaleX(1.022);transform-origin:0 50%;">0.00 ms</div>
<div class="t cy" style="left:551.3px;top:500.8px;transform:scaleX(1.008);transform-origin:0 50%;">600 ms</div>
<div class="t cy" style="left:599.7px;top:500.8px;">0.0 %</div>
<div class="t cy" style="left:648.5px;top:500.8px;transform:scaleX(1.025);transform-origin:0 50%;">50.0 ms</div>
<div class="t gr" style="left:500.5px;top:521.0px;transform:scaleX(1.172);transform-origin:0 50%;">Initial</div>
<div class="t gr" style="left:549.2px;top:521.0px;transform:scaleX(0.994);transform-origin:0 50%;">Peak</div>
<div class="t gr" style="left:646.7px;top:521.0px;transform:scaleX(1.023);transform-origin:0 50%;">Final</div>
<div class="t cy" style="left:502.9px;top:533.9px;">0.0 %</div>
<div class="t cy" style="left:551.3px;top:533.9px;transform:scaleX(0.992);transform-origin:0 50%;">100 %</div>
<div class="t cy" style="left:648.5px;top:533.9px;">0.0 %</div>
<div class="a" style="left:699.3px;top:375.0px;width:120.7px;height:86.8px;background:#a9abb5;border-radius:3px;"></div>
<div class="a" style="left:703.2px;top:379.6px;width:13.6px;height:13px;box-sizing:border-box;border:1px solid #2f93a6;background:#68e0f7;"></div>
<div class="t " style="left:706.2px;top:378.7px;transform:scaleX(1.085);transform-origin:0 50%;">A</div>
<div class="vb" style="left:721.4px;top:379.6px;width:94.4px;height:13.0px;line-height:11.0px;text-align:left;padding-left:2.5px;background:#dcdde3;border-color:#45464e;"><span style="display:inline-block;transform:scaleX(0.968);transform-origin:0 50%;">SVF 12dB</span></div>
<svg class="a" style="left:807.0px;top:383.1px" width="8" height="7" viewBox="0 0 8 7"><path d="M0.2 0.2h6.600L3.500 5.600z" fill="#111"/></svg>
<svg class="a" style="left:0;top:0" width="1024" height="565" viewBox="0 0 1024 565"><path d="M720.41 436.27A18.5 18.5 0 1 1 744.19 436.27" fill="none" stroke="#68e0f7" stroke-width="3.1" stroke-linecap="round"/><path d="M734.82 425.70L742.62 436.84" stroke="#1c1d22" stroke-width="2.4" stroke-linecap="round" fill="none"/></svg>
<div class="t " style="left:711.2px;top:439.8px;transform:scaleX(1.017);transform-origin:0 50%;">20.5 kHz</div>
<div class="t " style="left:783.7px;top:396.9px;transform:scaleX(1.085);transform-origin:0 50%;">Q</div>
<div class="vb" style="left:768.2px;top:411.4px;width:40.4px;height:13.0px;line-height:11.0px;"><span style="display:inline-block;transform:scaleX(1.019);transform-origin:50% 50%;">0.0</span></div>
<div class="t " style="left:769.1px;top:427.5px;transform:scaleX(0.983);transform-origin:0 50%;">L-B-H-N</div>
<div class="vb" style="left:768.2px;top:442.1px;width:40.4px;height:13.0px;line-height:11.0px;"><span style="display:inline-block;transform:scaleX(1.019);transform-origin:50% 50%;">0.0</span></div>
<div class="a" style="left:699.3px;top:464.3px;width:120.7px;height:88.6px;background:#a9abb5;border-radius:3px;"></div>
<div class="a" style="left:703.2px;top:469.4px;width:13.6px;height:13px;box-sizing:border-box;border:1px solid #a87a1c;background:#f3b632;"></div>
<div class="t " style="left:706.2px;top:468.5px;transform:scaleX(1.085);transform-origin:0 50%;">B</div>
<div class="vb" style="left:721.4px;top:469.4px;width:94.4px;height:13.0px;line-height:11.0px;text-align:left;padding-left:2.5px;background:#dcdde3;border-color:#45464e;"><span style="display:inline-block;transform:scaleX(0.968);transform-origin:0 50%;">SVF 12dB</span></div>
<svg class="a" style="left:807.0px;top:472.9px" width="8" height="7" viewBox="0 0 8 7"><path d="M0.2 0.2h6.600L3.500 5.600z" fill="#111"/></svg>
<svg class="a" style="left:0;top:0" width="1024" height="565" viewBox="0 0 1024 565"><path d="M720.41 526.17A18.5 18.5 0 1 1 744.19 526.17" fill="none" stroke="#f3b632" stroke-width="3.1" stroke-linecap="round"/><path d="M734.82 515.60L742.62 526.74" stroke="#1c1d22" stroke-width="2.4" stroke-linecap="round" fill="none"/></svg>
<div class="t " style="left:711.2px;top:530.5px;transform:scaleX(1.017);transform-origin:0 50%;">20.5 kHz</div>
<div class="t " style="left:783.7px;top:487.6px;transform:scaleX(1.085);transform-origin:0 50%;">Q</div>
<div class="vb" style="left:768.2px;top:502.1px;width:40.4px;height:13.0px;line-height:11.0px;"><span style="display:inline-block;transform:scaleX(1.019);transform-origin:50% 50%;">0.0</span></div>
<div class="t " style="left:769.1px;top:518.2px;transform:scaleX(0.983);transform-origin:0 50%;">L-B-H-N</div>
<div class="vb" style="left:768.2px;top:532.8px;width:40.4px;height:13.0px;line-height:11.0px;"><span style="display:inline-block;transform:scaleX(1.019);transform-origin:50% 50%;">0.0</span></div>
<div class="vb" style="left:865.5px;top:359.3px;width:31.1px;height:12.8px;line-height:10.8px;background:#c9cbd3;"><span style="display:inline-block;transform:scaleX(1.099);transform-origin:50% 50%;">Limit</span></div>
<svg class="a" style="left:0;top:0" width="1024" height="565" viewBox="0 0 1024 565"><circle cx="903.8" cy="365.800" r="3.300" fill="#5c5e68"/></svg>
<div class="a" style="left:823.0px;top:375.0px;width:86.7px;height:86.7px;background:#a9abb5;border-radius:3px;"></div>
<div class="vb" style="left:827.3px;top:379.6px;width:38.7px;height:13.0px;line-height:11.0px;"><span style="display:inline-block;transform:scaleX(1.085);transform-origin:50% 50%;">C</span></div>
<div class="t " style="left:835.1px;top:399.5px;transform:scaleX(1.027);transform-origin:0 50%;">Tone</div>
<svg class="a" style="left:0;top:0" width="1024" height="565" viewBox="0 0 1024 565"><path d="M843.200 414.5h7l-3.500 4z" fill="#111"/><path d="M839.67 443.98A12.4 12.4 0 0 1 843.81 421.62" fill="none" stroke="#1c1d22" stroke-width="2.400"/><path d="M849.39 421.62A12.4 12.4 0 0 1 853.53 443.98" fill="none" stroke="#1c1d22" stroke-width="2.400"/><path d="M846.600 419.0V433.7" stroke="#1c1d22" stroke-width="2.500" fill="none"/><rect x="883.100" y="380.2" width="4.200" height="63.3" fill="#111218"/><rect x="888.400" y="380.2" width="4.100" height="63.3" fill="#111218"/><path d="M903.500 399.5v9l-9.200 -4.500z" fill="#e4e5ea" stroke="#2b2c34" stroke-width="1"/></svg>
<div class="t " style="left:835.9px;top:444.6px;transform:scaleX(1.029);transform-origin:0 50%;">0.00</div>
<div class="t " style="left:871.0px;top:444.6px;transform:scaleX(1.008);transform-origin:0 50%;">-3.0 dB</div>
<div class="a" style="left:823.0px;top:464.5px;width:86.7px;height:88.5px;background:#a9abb5;border-radius:3px;"></div>
<div class="vb" style="left:827.3px;top:469.4px;width:38.7px;height:13.0px;line-height:11.0px;"><span style="display:inline-block;transform:scaleX(1.085);transform-origin:50% 50%;">C</span></div>
<div class="t " style="left:835.1px;top:490.7px;transform:scaleX(1.027);transform-origin:0 50%;">Tone</div>
<svg class="a" style="left:0;top:0" width="1024" height="565" viewBox="0 0 1024 565"><path d="M843.200 505.2h7l-3.500 4z" fill="#111"/><path d="M839.67 534.68A12.4 12.4 0 0 1 843.81 512.32" fill="none" stroke="#1c1d22" stroke-width="2.400"/><path d="M849.39 512.32A12.4 12.4 0 0 1 853.53 534.68" fill="none" stroke="#1c1d22" stroke-width="2.400"/><path d="M846.600 509.7V524.4" stroke="#1c1d22" stroke-width="2.500" fill="none"/><rect x="883.100" y="470.0" width="4.200" height="64.3" fill="#111218"/><rect x="888.400" y="470.0" width="4.100" height="64.3" fill="#111218"/><path d="M903.500 489.3v9l-9.200 -4.500z" fill="#e4e5ea" stroke="#2b2c34" stroke-width="1"/></svg>
<div class="t " style="left:835.9px;top:535.0px;transform:scaleX(1.029);transform-origin:0 50%;">0.00</div>
<div class="t " style="left:871.0px;top:535.0px;transform:scaleX(1.008);transform-origin:0 50%;">-3.0 dB</div>
<div class="a" style="left:912.3px;top:375.0px;width:62.7px;height:178.5px;background:#a9abb5;border-radius:3px 0 4px 3px;"></div>
<svg class="a" style="left:0;top:0" width="1024" height="565" viewBox="0 0 1024 565"><rect x="924.600" y="359.300" width="13.200" height="13.200" fill="#b58cf2" stroke="#2b2c34" stroke-width="0.800"/><circle cx="948" cy="366" r="6.200" fill="#e4e5ea" stroke="#1c1d22" stroke-width="1.100"/><path d="M944.800 367.600a3.400 3.400 0 0 1 5 -4.200M951.200 364.400a3.400 3.400 0 0 1 -5 4.200" fill="none" stroke="#1c1d22" stroke-width="1.300"/><circle cx="965" cy="366" r="6.200" fill="#e4e5ea" stroke="#1c1d22" stroke-width="1.100"/><path d="M961.800 362.800h5.200l1.200 1.200v5.200h-6.400z" fill="#16171c"/><rect x="963" y="362.800" width="3" height="2.200" fill="#e4e5ea"/></svg>
<div class="t " style="left:925.6px;top:360.3px;transform:scaleX(1.085);transform-origin:0 50%;font-size:9.500px;font-weight:bold;color:#1a1250;">&#9837;</div>
<div class="t " style="left:930.8px;top:356.9px;transform:scaleX(1.085);transform-origin:0 50%;font-size:9px;font-weight:bold;-webkit-text-stroke:0;color:#1a1250;">#</div>
<div class="vb" style="left:917.4px;top:379.7px;width:51px;height:12.800px;line-height:10.800px;background:#68e0f7;border-color:#2f93a6;color:#174e5a;"><span style="display:inline-block;transform:scaleX(1.1);">Poly</span></div>
<div class="vb" style="left:917.4px;top:396.3px;width:51.0px;height:13.2px;line-height:11.2px;text-align:left;padding-left:2.5px;background:#dcdde3;border-color:#45464e;"><span style="display:inline-block;transform:scaleX(1.085);transform-origin:0 50%;">8</span></div>
<svg class="a" style="left:959.6px;top:399.8px" width="8" height="7" viewBox="0 0 8 7"><path d="M0.2 0.2h6.600L3.500 5.600z" fill="#111"/></svg>
<div class="t " style="left:917.4px;top:412.5px;transform:scaleX(1.045);transform-origin:0 50%;">Spread</div>
<div class="vb" style="left:917.4px;top:427.5px;width:51.0px;height:12.7px;line-height:10.7px;"><span style="display:inline-block;">0.0 %</span></div>
<div class="t " style="left:917.4px;top:443.9px;transform:scaleX(1.042);transform-origin:0 50%;">Stack</div>
<div class="vb" style="left:917.4px;top:457.9px;width:51.0px;height:13.2px;line-height:11.2px;text-align:left;padding-left:2.5px;background:#dcdde3;border-color:#45464e;"><span style="display:inline-block;transform:scaleX(1.156);transform-origin:0 50%;">Off</span></div>
<svg class="a" style="left:959.6px;top:461.4px" width="8" height="7" viewBox="0 0 8 7"><path d="M0.2 0.2h6.600L3.500 5.600z" fill="#111"/></svg>
<div class="a" style="left:915.7px;top:475.5px;width:53.5px;height:1.2px;background:#80828d;"></div>
<div class="t " style="left:917.4px;top:477.9px;transform:scaleX(1.031);transform-origin:0 50%;">Drive</div>
<div class="vb" style="left:917.4px;top:493.0px;width:51.0px;height:12.5px;line-height:10.5px;"><span style="display:inline-block;">0.0 %</span></div>
<div class="t " style="left:918.6px;top:509.7px;transform:scaleX(1.021);transform-origin:0 50%;">Volume</div>
<svg class="a" style="left:0;top:0" width="1024" height="565" viewBox="0 0 1024 565"><path d="M919.66 538.08A8.6 8.6 0 1 1 936.60 536.00" fill="none" stroke="#1c1d22" stroke-width="2.200"/><path d="M927.71 544.39A8.4 8.4 0 0 1 920.73 540.20" fill="none" stroke="#7fe6f2" stroke-width="3"/><path d="M928.200 535.900L918.900 539.300" stroke="#1c1d22" stroke-width="2.200" fill="none"/></svg>
<div class="t " style="left:932.2px;top:537.1px;transform:scaleX(1.019);transform-origin:0 50%;">-6.0 dB</div>
<div class="a" style="left:977.5px;top:399.0px;width:2.0px;height:114.0px;background:#1d1e26;"></div>
<div class="a" style="left:980.3px;top:399.0px;width:2.0px;height:114.0px;background:#1d1e26;"></div>
<div class="a" style="left:977.5px;top:411.3px;width:4.8px;height:1.0px;background:#c9cbd3;"></div>
<div class="a" style="left:984.0px;top:357.0px;width:50.0px;height:198.0px;background:#a6a8b2;border-radius:4px 0 0 4px;"></div>
</body></html>
